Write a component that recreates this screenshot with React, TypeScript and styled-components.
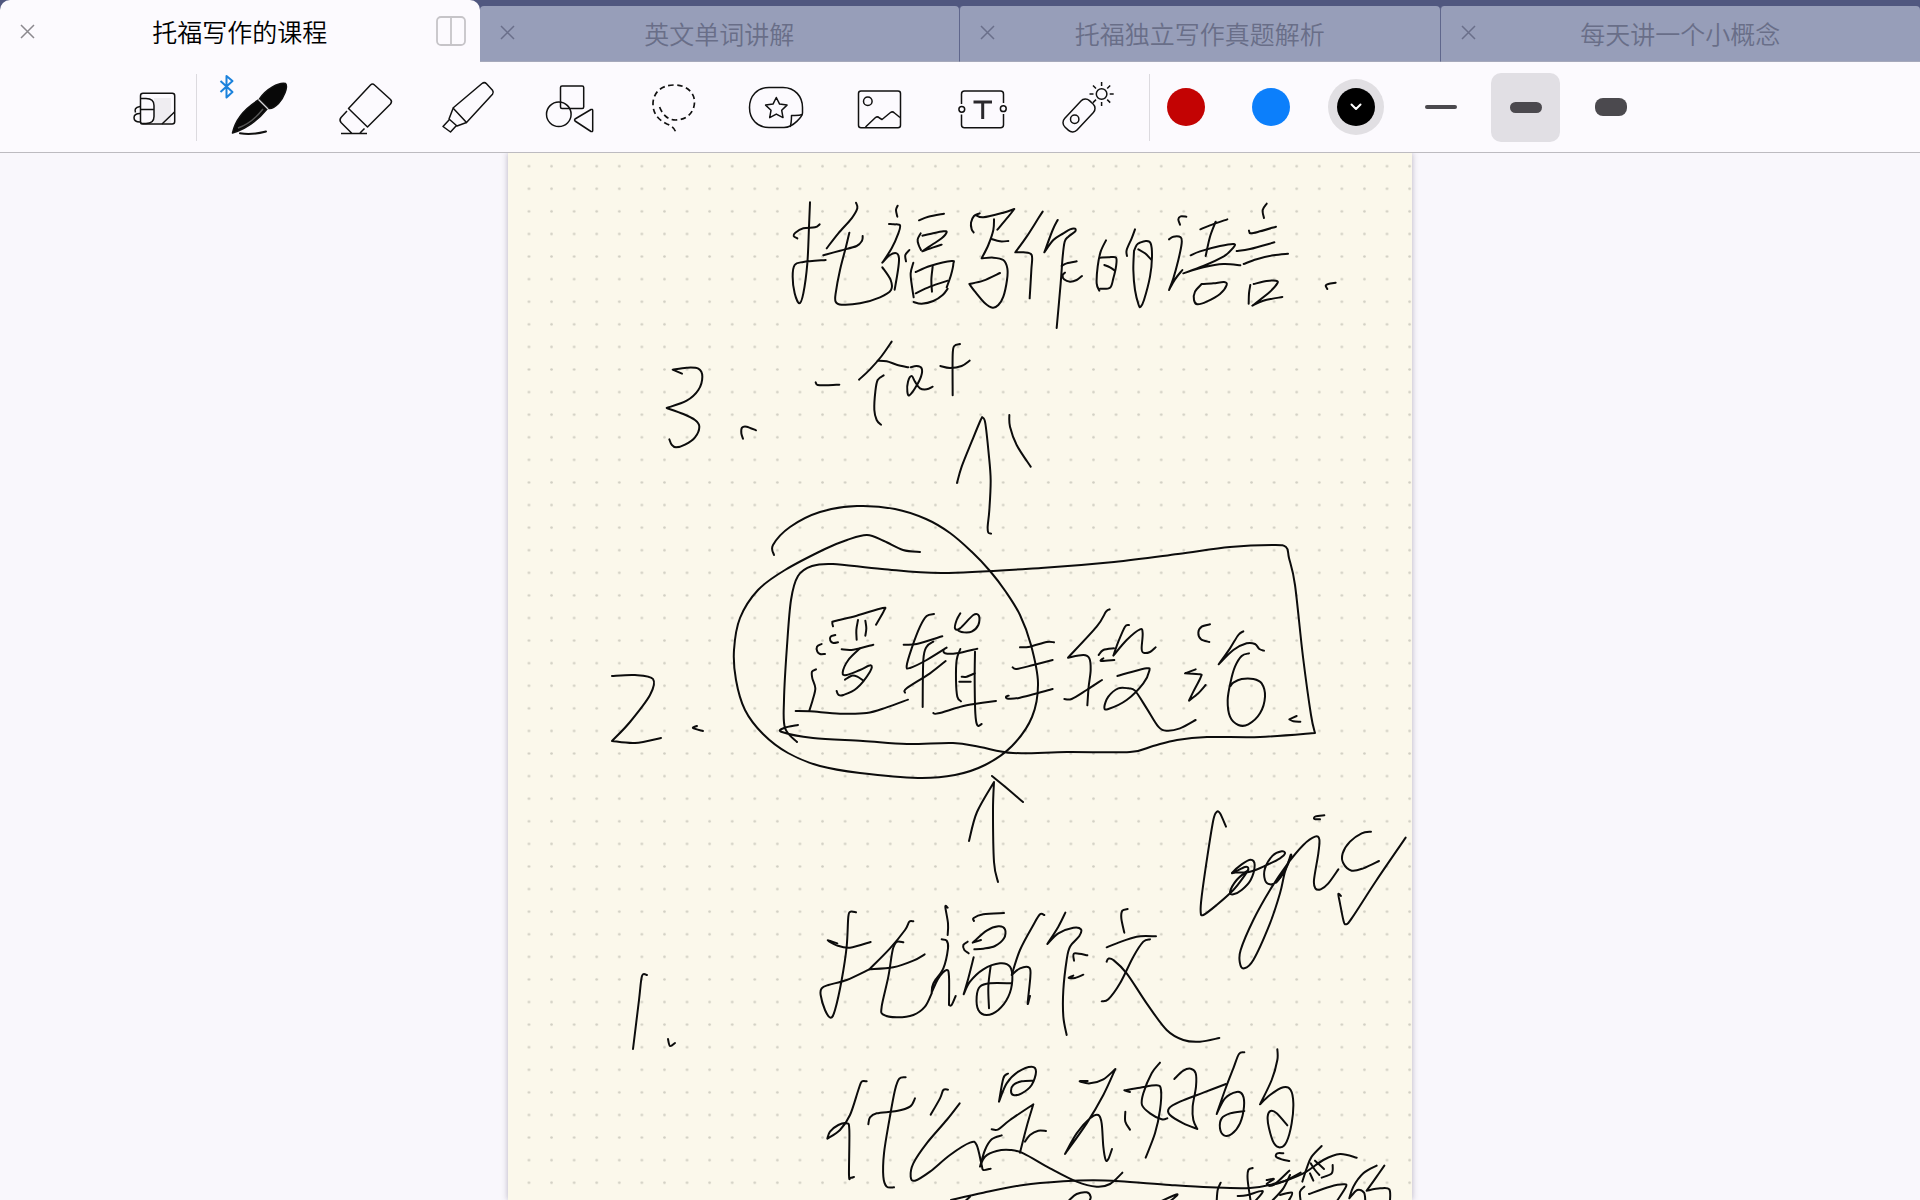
import React from "react";
import styled, { createGlobalStyle, css } from "styled-components";

const GlobalStyle = createGlobalStyle`
  *, *::before, *::after { box-sizing: border-box; }
  body { margin: 0; background: #faf8fd; }
  button {
    margin: 0;
    padding: 0;
    border: 0;
    background: none;
    color: inherit;
    font: inherit;
    cursor: pointer;
  }
`;

const Screen = styled.div`
  display: flex;
  flex-direction: column;
  height: 100vh;
  overflow: hidden;
  font-family: "Noto Sans CJK SC", sans-serif;
`;

/* ---------- tabs ---------- */

const TabBar = styled.nav`
  display: flex;
  align-items: flex-end;
  height: 62px;
  flex: none;
  background: #50577f;
`;

const Tab = styled.div<{ $active?: boolean; $divided?: boolean }>`
  display: grid;
  grid-template-columns: 1fr auto 1fr;
  align-items: center;
  flex: 1;
  height: 56px;
  padding: 0 14px 2px;
  background: #979eb9;
  color: #696e88;
  border-bottom: 1px solid #a6a9bb;
  border-radius: 4px 4px 0 0;
  ${(p) => p.$divided && css`border-left: 1px solid #5f668c;`}
  ${(p) =>
    p.$active &&
    css`
      height: 62px;
      padding-bottom: 0;
      background: #fcfafe;
      color: #000;
      border-bottom: 0;
      border-radius: 10px 10px 0 0;
    `}
`;

const TabTitle = styled.button`
  font-size: 25px;
  line-height: 36px;
  font-weight: 350;
  white-space: nowrap;
`;

const TabIconButton = styled.button<{ $end?: boolean; $dim?: boolean }>`
  display: flex;
  justify-self: ${(p) => (p.$end ? "end" : "start")};
  padding-left: ${(p) => (p.$end ? 0 : 6)}px;
  color: ${(p) => (p.$end ? "#c6c4c8" : p.$dim ? "#6a6f8a" : "#8b898e")};
`;

const CloseIcon = () => (
  <svg width="15" height="15" viewBox="0 0 15 15" fill="none" stroke="currentColor" strokeWidth="1.5">
    <path d="M1 1l13 13M14 1L1 14" />
  </svg>
);

const SplitIcon = () => (
  <svg width="30" height="30" viewBox="0 0 30 30" fill="none" stroke="currentColor" strokeWidth="1.8">
    <rect x="1" y="1" width="28" height="28" rx="4" />
    <path d="M15 1v28" />
  </svg>
);

/* ---------- toolbar ---------- */

const Toolbar = styled.header`
  display: flex;
  align-items: center;
  flex: none;
  height: 91px;
  padding-left: 123px;
  background: #fcfafe;
  border-bottom: 1px solid #bdbbc0;
`;

const ToolGroup = styled.div<{ $gap?: number }>`
  display: flex;
  align-items: center;
  gap: ${(p) => p.$gap ?? 0}px;
`;

const Separator = styled.div<{ $before: number; $after: number }>`
  width: 1px;
  height: 67px;
  margin: 0 ${(p) => p.$after}px 0 ${(p) => p.$before}px;
  background: #dcdadf;
`;

const ToolButton = styled.button<{ $wide?: boolean }>`
  display: flex;
  justify-content: center;
  width: ${(p) => (p.$wide ? 103 : 64)}px;
`;

const Glyph = styled.svg`
  display: block;
  overflow: visible;
  fill: none;
  stroke: #111;
  stroke-width: 1.5;
  stroke-linejoin: round;
`;

const ChoiceButton = styled.button<{ $selected?: boolean }>`
  display: flex;
  align-items: center;
  justify-content: center;
  width: 69px;
  height: 69px;
  border-radius: 10px;
  background: ${(p) => (p.$selected ? "#e1dfe4" : "transparent")};
`;

const Swatch = styled.span<{ $color: string; $ring?: boolean }>`
  display: flex;
  align-items: center;
  justify-content: center;
  width: 38px;
  height: 38px;
  border-radius: 50%;
  background: ${(p) => p.$color};
  ${(p) => p.$ring && css`box-shadow: 0 0 0 9px #e1dfe3;`}
`;

const Nib = styled.span<{ $size: number }>`
  width: 32px;
  height: ${(p) => p.$size}px;
  border-radius: 8px;
  background: #4b494e;
`;

const tools: { name: string; drawing: React.ReactNode }[] = [
  {
    name: "Pen",
    drawing: (
      <>
        <path d="M-9.5 6L2.5 17l-6 5.500V1l6 5-12 11" stroke="#1b82dc" strokeWidth="2" />
        <path d="M2.500 58C5 46 14 34 28.500 25l9 8.500C29 44 16 54 2.500 58z" fill="#080808" />
        <path d="M29.500 24C36 14 49 7 55.500 8.500c3 3-2 15-7 20-4 4-7 5.500-9.500 5z" fill="#080808" />
        <path d="M28.500 24.500l9.500 9.500" stroke="#d8d6da" strokeWidth="1.200" />
        <path d="M8 53C17 50 26 43 33 34" stroke="#555" strokeWidth="1.500" />
        <path d="M10 58.300c8 1.200 17 .6 26-1.800" strokeWidth="2" strokeLinecap="round" />
      </>
    ),
  },
  {
    name: "Eraser",
    drawing: (
      <>
        <path d="M15.500 33.500L37.500 10q2-2 4 0l16 14.500q2 2 0 4.500L34.500 52z" />
        <path d="M14 36l-6 6.500q-2 2.500 0 5L19 58.500M31.500 53.500L27 58M8 58.500h26" />
      </>
    ),
  },
  {
    name: "Highlighter",
    drawing: (
      <>
        <path d="M17 33L46 8.500q2.500-1.800 4.500.2l6 6.500q1.500 2 0 4L30.500 47.500z" />
        <path d="M17 33.500l-4 10.500 8 7 9.500-3.500M13 45l-6 6.500 7.500 5.500 5.500-6" />
      </>
    ),
  },
  {
    name: "Shapes",
    drawing: (
      <>
        <rect x="21.500" y="11" width="23.200" height="22.500" rx="1.500" />
        <circle cx="19.800" cy="39.300" r="12.300" />
        <path d="M36 44q-1 1 0 2l16 10.500q1.700.5 1.700-1V35.500q0-1.500-1.700-1z" />
      </>
    ),
  },
  {
    name: "Lasso",
    drawing: (
      <path
        d="M17.600 32C21 41 27 45 33.500 45 45 45 52.500 37 52.500 27 52.500 17 44 10 32.500 10 20 10 11 17 11 29c0 12 8 17 14 20 5 2 8 5 9 9"
        strokeDasharray="5.500 3.500"
        strokeWidth="1.700"
      />
    ),
  },
  {
    name: "Sticker",
    drawing: (
      <>
        <path d="M39 52.500H24C12 52.500 4.500 44 4.500 32.500S12 12.500 24 12.500h14c12 0 19.500 9 19.500 20V38c0 3-9 14.500-18.500 14.500z" />
        <path d="M57.500 39.500c-4 1.500-8 1-11 1 0 4 0 8-1.500 11.500" />
        <path d="M31.300 22.500l3.300 6.600 7.400 1-5.300 5.200 1.300 7.300-6.700-3.500-6.600 3.500 1.300-7.300-5.400-5.200 7.400-1z" />
      </>
    ),
  },
  {
    name: "Image",
    drawing: (
      <>
        <rect x="10.500" y="16" width="42" height="36.700" rx="2.500" />
        <circle cx="19.800" cy="26.300" r="4.300" />
        <path d="M17.500 52l10-9.500q2-1.500 4 .5l2.500 1.500 8.500-7q2-1.500 4 .5l5.500 4.500" />
      </>
    ),
  },
  {
    name: "Text",
    drawing: (
      <>
        <path d="M10.500 29V19q0-3 3-3h36q3 0 3 3v9M10.500 39.500V50q0 2.700 3 2.700h36q3 0 3-2.700V39" />
        <circle cx="10.800" cy="34.300" r="2.900" />
        <circle cx="52.300" cy="33.700" r="2.900" />
        <path d="M22.500 27h18.500M31.700 27v17" strokeWidth="3" stroke="#2a282c" />
      </>
    ),
  },
  {
    name: "Laser pointer",
    drawing: (
      <>
        <rect x="-18" y="-8.500" width="36" height="17" rx="6" transform="translate(25 40.500) rotate(-47)" />
        <circle cx="20.700" cy="44.300" r="4.200" />
        <circle cx="47.600" cy="19" r="5.300" />
        <path d="M47.600 7v4M47.600 27v4M35.500 19h4M55.700 19h4M39 10.500l3 3M53.200 24.600l3 3M56.200 10.500l-3 3M42 24.600l-3 3" />
      </>
    ),
  },
];

/* ---------- paper ---------- */

const Desk = styled.main`
  display: flex;
  justify-content: center;
  flex: 1;
  min-height: 0;
  overflow: hidden;
  background: #f9f7fc;
`;

const Paper = styled.article`
  width: min(904px, 100%);
  background: #fbf8eb;
  box-shadow: 0 0 6px rgba(60, 50, 80, 0.35);
`;

const Ink = styled.svg`
  display: block;
  width: 100%;
  fill: none;
  stroke: #0c0c0c;
  stroke-linecap: round;
  stroke-linejoin: round;
`;

/** Pen strokes are sampled points; a repeated point marks a sharp turn. */
type StrokeGroup = { x: number; y: number; unit: number; strokes: string[] };

const THIRD = 1 / 3;

const groups: StrokeGroup[] = [
  {
    x: 770, y: 190, unit: THIRD,
    strokes: [
      "120,37 117,110 112,220 100,310 88,340 74,310 68,260 74,225 100,216 167,210",
      "82,145 71,138 76,128 100,115 135,112 149,103",
      "258,38 262,55 245,85 205,130 170,175",
      "160,196 210,182 260,168 276,152 278,138",
      "238,128 228,170 210,240 197,310 197,335 215,344 270,340 330,322 363,300 362,270 337,232",
      "383,47 378,60 382,80",
      "357,102 372,103 390,106 385,130 365,175 337,218 337,218 360,195 380,190 387,205 384,240 374,299",
      "447,91 475,80 522,71",
      "418,180 406,195 408,214",
      "452,130 443,148 446,165 453,180",
      "457,137 480,132 520,124 530,127 515,145 485,165 457,184 457,184 490,172 515,164",
      "430,218 422,250 426,290 431,322",
      "437,246 480,228 545,213 550,222 543,255 530,292",
      "488,230 484,270 486,305",
      "437,310 480,290 533,272",
      "431,336 455,341 490,333 518,315 533,296",
      "629,70 612,78 603,98 605,118 611,127",
      "617,75 640,82 700,68 733,57 733,57 715,80 682,119",
      "672,88 670,120 655,165 635,205 635,205 670,203 700,210 712,235 711,270 700,320 685,345 668,353 645,340 615,305 598,282 598,282 640,272 690,249",
      "665,147 690,154 715,153",
      "818,65 805,85 770,140 736,187 736,187 760,187 785,195 784,240 779,325",
      "863,90 848,120 823,187 823,187 850,150 880,130 900,118 915,116 915,125 895,140 884,155 878,200 872,280 860,414",
      "875,228 890,220 920,214",
      "885,248 878,255 882,268 900,275 920,270 936,258",
    ],
  },
  {
    x: 1060, y: 190, unit: THIRD,
    strokes: [
      "138,151 122,185 113,230 110,280 118,302",
      "122,203 145,202 168,203 168,230 160,265 150,293 120,296",
      "133,225 150,232 165,242",
      "225,118 215,145 200,180 201,198",
      "222,183 220,240 225,300 236,345 242,350 252,330 270,260 276,200 272,160 258,153 240,158 230,165 222,183",
      "235,178 255,190 273,208",
      "379,80 362,79 355,88 360,104",
      "327,148 340,140 362,142 365,160 355,210 340,265 327,300 327,300 345,268 367,240",
      "421,118 450,106 502,88",
      "467,95 450,140 437,198",
      "392,196 420,184 480,168 522,162 518,175 490,200 430,228 370,250 370,250 430,232 490,222 541,226",
      "425,282 405,305 402,330 412,343 440,335 480,312 500,285 492,276 460,280 427,282",
      "620,41 608,60 612,84",
      "567,122 572,130 600,124 648,110",
      "530,183 570,177 643,157",
      "551,222 590,208 640,196 684,191",
      "571,285 567,310 566,341",
      "581,282 620,273 648,272 652,280 630,305 577,347 577,347 610,332 667,321",
      "802,297 797,287 805,282 827,278",
    ],
  },
  {
    x: 640, y: 330, unit: THIRD,
    strokes: [
      "126,131 98,119 98,119 140,113 175,116 187,140 175,180 140,212 80,234 80,234 130,252 165,270 178,290 165,322 135,344 108,352 95,344 88,328",
      "309,326 304,310 306,293 320,290 348,301",
      "527,157 533,165 560,166 598,164",
      "755,35 725,78 690,118 657,149",
      "713,92 740,94 770,104 805,112",
      "731,136 713,150 706,185 703,240 710,270 723,284",
      "812,112 830,108 845,115 843,140 825,175 808,196 802,185 804,155 815,138 825,155 840,175 860,178 878,170",
      "901,108 930,114 965,108 989,92",
      "960,42 943,48 938,75 938,196",
      "951,459 965,410 995,335 1022,270 1028,263 1036,280 1046,370 1052,450 1048,540 1043,590 1045,608 1053,611",
      "1108,255 1110,290 1130,345 1172,410",
    ],
  },
  {
    x: 0, y: 0, unit: 1,
    strokes: [
      "774,555 773,545 790,527 820,512 857,506 895,509 926,519 950,533 972,552 990,571 1006,592 1020,615 1031,645 1038,683 1032,717 1012,746 985,765 955,775 918,778 860,773 820,766 788,753 763,734 745,710 736,680 734,650 740,618 758,590 785,570 825,549 847,540 867,535 884,541 903,550 920,552",
      "797,742 785,728 784,700 787,646 791,600 798,576 812,566 833,564 882,569 943,573 1041,568 1114,562 1178,554 1230,547 1273,545 1286,547 1289,558 1295,585 1303,657 1311,715 1315,733 1315,733 1260,737 1207,737 1177,740 1153,746 1130,752 1067,752 1013,753 980,747 953,743 907,744 863,741 813,738 782,732 784,728 798,725",
      "998,882 994,862 993,810 994,782 994,782 977,812 969,841",
      "992,776 1003,785 1023,802",
      "612,676 635,675 653,679 650,695 630,722 612,741 612,741 635,743 661,738",
      "697,726 693,728 703,731",
      "647,975 642,976 639,1000 633,1049",
      "668,1039 670,1046 675,1043",
    ],
  },
  {
    x: 780, y: 580, unit: THIRD,
    strokes: [
      "159,139 157,128 165,123 230,107 308,84 312,92 288,134",
      "234,120 229,150 230,179",
      "256,122 259,145 256,167",
      "166,165 152,170 151,182 160,189 174,187",
      "125,192 111,200 112,215 120,222 135,222",
      "185,208 220,209 280,194",
      "240,205 205,240 188,278 200,285 240,270 272,256 270,275 230,325 190,345 175,344 170,333",
      "195,299 215,287 232,290 250,302",
      "108,268 96,275 97,295 106,325 98,360 88,392",
      "47,393 90,394 180,401 260,399 320,382 384,359",
      "462,102 440,108 420,140 395,205 380,258 390,264 440,240 500,203",
      "371,194 410,192 487,169",
      "460,185 440,200 430,240 428,381",
      "497,243 450,280 380,325 375,338",
      "541,100 530,120 525,145 540,145 580,105 597,108 595,135 575,155 550,157 535,152",
      "490,210 495,220 530,220 592,206",
      "541,207 530,240 528,300 532,350 543,364",
      "585,215 584,300 586,400 592,436 605,432",
      "545,290 560,290 584,280",
      "538,305 572,305",
      "460,399 475,400 560,376 648,363",
    ],
  },
  {
    x: 1000, y: 580, unit: THIRD,
    strokes: [
      "60,202 90,200 140,186 162,187",
      "38,262 50,267 100,255 158,240",
      "26,347 18,350 24,356 60,353 158,327",
      "329,88 318,95 290,140 204,233 204,233 250,225 268,235 272,270 266,320 262,376",
      "193,357 215,357 260,330 306,300",
      "387,135 375,140 355,185 340,227 340,227 380,180 420,148 428,160 425,205 430,218 450,216 467,202",
      "342,205 310,210 296,225",
      "310,235 303,243 343,240",
      "352,288 380,280 440,265 448,272 430,310 380,360 325,387 313,382 325,350 355,325 385,325 405,332 440,385 475,440 500,452 540,445 587,420",
      "630,133 605,140 595,158 603,178 628,186",
      "587,268 555,280 555,280 600,283 602,292 580,335 567,362 567,362 595,340 617,315",
      "730,154 715,165 690,205 656,253 656,253 700,210 740,190 765,192 778,207 792,212",
      "747,220 725,228 705,260 692,305 683,360 690,410 715,435 745,433 780,400 795,350 785,310 760,297 725,297 700,308 692,318",
      "890,408 868,418 868,418 880,424 901,425",
    ],
  },
  {
    x: 1170, y: 790, unit: THIRD,
    strokes: [
      "168,110 150,70 140,66 130,90 112,200 95,320 92,365 100,375 140,345 190,300 220,262 235,237 225,231 195,246 187,248 215,223 242,209 254,225 242,270 215,300 190,313 180,306 200,270 235,240",
      "187,248 240,245 290,225 330,205 345,190 335,184 308,197 285,235 285,270 300,283 320,275 348,235 362,195 362,205 345,245 330,310 300,400 250,510 222,535 210,520 212,480 250,390 300,300 350,225 400,165 435,140 448,148 445,190 432,270 436,295 452,298 475,280 505,238",
      "318,278 340,250 358,210",
      "450,88 433,87 437,79 463,76",
      "603,125 575,130 540,155 518,190 520,220 545,242 580,235 627,213",
      "513,318 505,312 510,340 520,390 527,403 545,385 620,270 707,143",
    ],
  },
  {
    x: 800, y: 890, unit: THIRD,
    strokes: [
      "168,67 152,65 145,80 140,170 125,270 105,360 92,383 75,360 62,315 65,295 85,285 140,270 208,238",
      "112,160 83,151 110,166 150,173 212,156",
      "340,94 328,95 315,120 270,175 208,238 208,238 280,232 340,212 374,193",
      "310,157 290,156 278,180 265,260 245,350 250,374 290,382 340,375 375,350 395,310",
      "443,53 436,50 444,100 443,135",
      "425,148 440,152 444,175 430,235 400,280 395,308 395,308 415,265 440,240 447,260 447,345 447,345 455,345 467,318",
      "522,93 521,84 550,73 612,69",
      "543,150 518,158 518,158 560,122 595,109 615,118 612,145 585,168 550,176 523,178",
      "503,155 490,165 493,180 506,190",
      "521,202 505,265 491,313 491,313 510,275 550,238 600,220 630,230 637,270 625,320 595,360 560,375 535,360 530,320 540,290 570,280 634,280",
      "572,228 565,290 567,355",
      "733,75 720,73 700,105 660,180 635,255 635,255 660,235 688,233 691,260 683,340 690,318",
      "796,68 775,110 742,162 742,162 775,130 820,113 843,118 838,138 810,170 800,210 790,300 790,380 800,435",
      "822,212 823,190 862,196",
      "820,257 806,264 825,264 850,254",
      "983,57 967,62 964,85 973,128",
      "920,172 950,160 1010,140 1068,139",
      "1050,148 1030,155 1000,200 960,280 925,328 905,334",
      "920,215 925,206 940,210 980,250 1040,340 1100,420 1150,450 1200,455 1258,444",
    ],
  },
  {
    x: 810, y: 1040, unit: THIRD,
    strokes: [
      "170,124 155,125 145,150 120,225 90,270 52,296 52,296 60,275 85,255 110,250 118,270 117,405 122,413 132,411",
      "287,112 268,116 255,150 238,240 222,340 220,410 230,440 252,442",
      "175,253 180,232 200,220 260,213 300,200 315,175",
      "414,149 400,150 390,175 362,224",
      "449,190 410,240 350,310 310,370 302,410 315,422 360,395 420,345 480,308 500,315 515,375 520,390 542,386",
      "594,101 580,115 567,185 567,185 590,130 625,95 665,80 678,95 665,135 635,160 610,165 603,152 610,135 635,124 670,122",
      "545,268 565,268 600,240 670,193 670,193 650,260 630,338",
      "645,305 660,285 685,272 708,273",
      "575,286 545,298 525,330 510,380 510,380 525,350 560,333 600,330 640,340 720,385 800,425 860,440 900,432 937,398",
      "833,123 812,123 812,125 840,130 880,118 916,87 916,87 880,165 830,250 765,342 765,342 800,280 840,235 865,225 875,250 880,320 887,360 895,357 906,327",
      "423,480 520,458 640,435 760,424 850,421 930,424 1080,435 1200,442 1320,444 1400,430 1480,400 1540,360 1590,342 1640,353",
      "465,484 480,470",
      "778,480 800,462 830,457 842,470 838,484",
    ],
  },
  {
    x: 1070, y: 1040, unit: THIRD,
    strokes: [
      "180,156 163,151 163,151 210,143 260,136 273,150 270,210 255,280 227,353",
      "270,68 245,100 220,160 216,195 240,220 275,238 292,235",
      "166,215 166,245 180,269",
      "313,117 340,92 362,86 377,100 378,140 368,200 370,240 382,267 382,267 340,250 300,225 297,205 330,185 400,158 468,132",
      "523,37 507,42 490,85 465,150 440,222 440,222 465,175 500,156 518,165 522,200 510,250 485,282 462,286 450,265 455,235 480,220 523,213",
      "622,28 622,60 605,120 570,193 570,193 600,165 640,142 662,150 670,190 665,250 650,305 632,322 612,310 597,265 593,230 602,213 620,220 652,256",
      "640,340 622,340 618,350 635,358 658,363",
      "755,318 725,350 710,385 697,425",
      "452,428 443,450 440,484",
      "548,384 535,390 533,420 542,484",
      "503,468 530,466 578,453 555,484",
      "590,420 612,417 590,432 612,434 658,392",
      "598,437 640,425 692,398",
      "660,405 640,445 605,484",
      "630,465 666,458 655,484",
      "722,370 735,390 748,405",
      "735,362 762,387",
      "720,400 730,422",
      "788,375 785,400 755,413",
      "703,440 690,455 692,484",
      "717,462 780,440 820,433 828,440 800,484",
      "920,377 880,400 850,440 838,475 838,475 862,450 882,458 886,484",
      "943,377 920,410 890,452 890,452 930,445 958,448 960,484",
      "272,484 322,463 300,484",
    ],
  },
];

/** Runs a Catmull-Rom curve through the sampled points of one stroke. */
function strokePath(points: string): string {
  const p = points.split(" ").map((pair) => pair.split(",").map(Number));
  const at = (i: number) => p[Math.max(0, Math.min(p.length - 1, i))];
  let d = `M${p[0][0]} ${p[0][1]}`;
  for (let i = 0; i < p.length - 1; i++) {
    const [a, b, c, e] = [at(i - 1), at(i), at(i + 1), at(i + 2)];
    if (b[0] === c[0] && b[1] === c[1]) continue;
    const c1 = [b[0] + (c[0] - a[0]) / 6, b[1] + (c[1] - a[1]) / 6];
    const c2 = [c[0] - (e[0] - b[0]) / 6, c[1] - (e[1] - b[1]) / 6];
    d += `C${c1[0].toFixed(1)} ${c1[1].toFixed(1)} ${c2[0].toFixed(1)} ${c2[1].toFixed(1)} ${c[0]} ${c[1]}`;
  }
  return d;
}

const tabs = ["托福写作的课程", "英文单词讲解", "托福独立写作真题解析", "每天讲一个小概念"];
const swatches = ["#c30303", "#0c7ffb", "#000"];
const nibs = [4, 11, 18];

export default function App() {
  return (
    <Screen>
      <GlobalStyle />
      <TabBar>
        {tabs.map((title, i) => (
          <Tab key={title} $active={i === 0} $divided={i > 1}>
            <TabIconButton $dim={i > 0} aria-label="Close tab">
              <CloseIcon />
            </TabIconButton>
            <TabTitle>{title}</TabTitle>
            {i === 0 && (
              <TabIconButton $end aria-label="Split view">
                <SplitIcon />
              </TabIconButton>
            )}
          </Tab>
        ))}
      </TabBar>

      <Toolbar>
        <ToolButton aria-label="Zoom window">
          <Glyph width="64" height="64" viewBox="0 0 64 64">
            <rect x="31" y="23" width="17" height="25" fill="#efedf1" stroke="none" />
            <rect x="17.500" y="18.300" width="34.200" height="30.700" rx="2.500" />
            <path d="M17.500 23.500h5.500q8 0 8 7v11q0 7-8 7h-5.500M17.500 34.500H31M39 49l12.500-12" />
            <path d="M17 31.500c-5 1-5.500 3-4.500 6M17 38.500c-4 0-6 1.500-6 4.300s2 4.200 6 4.200" />
          </Glyph>
        </ToolButton>
        <Separator $before={9} $after={14} />
        <ToolGroup>
          {tools.map((tool) => (
            <ToolButton key={tool.name} $wide aria-label={tool.name}>
              <Glyph width="65" height="64" viewBox="0 0 65 64">
                {tool.drawing}
              </Glyph>
            </ToolButton>
          ))}
        </ToolGroup>
        <Separator $before={11} $after={1} />
        <ToolGroup $gap={16}>
          {swatches.map((color, i) => (
            <ChoiceButton key={color} aria-label="Ink colour" aria-pressed={i === 2}>
              <Swatch $color={color} $ring={i === 2}>
                {i === 2 && (
                  <svg width="12" height="8" viewBox="0 0 12 8" fill="none" stroke="#fff" strokeWidth="2">
                    <path d="M1.500 1.500L6 6l4.500-4.500" strokeLinecap="round" strokeLinejoin="round" />
                  </svg>
                )}
              </Swatch>
            </ChoiceButton>
          ))}
          {nibs.map((size, i) => (
            <ChoiceButton key={size} $selected={i === 1} aria-label="Stroke width" aria-pressed={i === 1}>
              <Nib $size={size} />
            </ChoiceButton>
          ))}
        </ToolGroup>
      </Toolbar>

      <Desk>
        <Paper>
          <Ink viewBox="508 153 904 1047" role="img" aria-label="托福写作的语言">
            <defs>
              <pattern id="dots" x="495.100" y="132.300" width="22.580" height="22.590" patternUnits="userSpaceOnUse">
                <circle cx="11.300" cy="11.300" r="1.300" fill="#d0cec2" stroke="none" />
              </pattern>
            </defs>
            <rect x="508" y="153" width="904" height="1047" fill="url(#dots)" stroke="none" />
            {groups.map((g, i) => (
              <g key={i} transform={`translate(${g.x} ${g.y}) scale(${g.unit})`} strokeWidth={2 / g.unit}>
                {g.strokes.map((s) => (
                  <path key={s} d={strokePath(s)} />
                ))}
              </g>
            ))}
          </Ink>
        </Paper>
      </Desk>
    </Screen>
  );
}
